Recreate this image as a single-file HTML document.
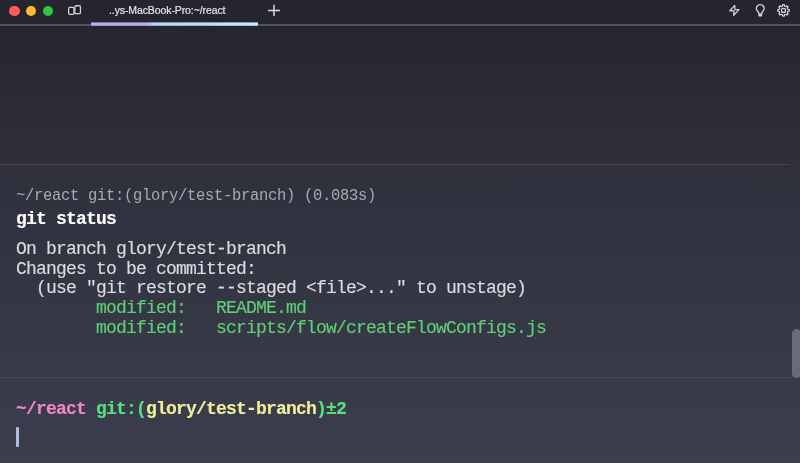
<!DOCTYPE html>
<html><head><meta charset="utf-8">
<style>
html,body{margin:0;padding:0;}
body{width:800px;height:463px;overflow:hidden;position:relative;background:#262631;}
#term{position:absolute;left:0;top:26px;width:800px;height:437px;
  background:linear-gradient(to bottom,#262631 0px,#2a2a36 62px,#2e2e3a 114px,#2f303c 138px,#353745 280px,#3c3e4e 437px);}
#titlebar{position:absolute;left:0;top:0;width:800px;height:24px;background:#252530;}
#tline{position:absolute;left:0;top:24px;width:800px;height:2px;background:#53535d;}

.dot{position:absolute;top:5.75px;width:10.5px;height:10.5px;border-radius:50%;}
.t{position:absolute;left:16px;white-space:pre;will-change:transform;font-family:"Liberation Mono",monospace;line-height:20px;}
.o{font-size:18px;letter-spacing:-0.8px;color:#dcdce0;-webkit-text-stroke:0.15px currentColor;}
.h{font-size:15.5px;letter-spacing:-0.3px;color:#a8a8b0;transform:scaleY(1.07);transform-origin:0 14px;}
.b{font-weight:bold;}
#tabtitle{position:absolute;will-change:transform;left:109px;top:4.4px;font-family:"Liberation Sans",sans-serif;font-size:10.5px;color:#e4e4e8;-webkit-text-stroke:0.2px #e4e4e8;letter-spacing:-0.1px;white-space:pre;line-height:12px;}
.sep{position:absolute;left:0;width:790px;height:1px;background:#454552;}
#scroll{position:absolute;left:792px;top:329px;width:9px;height:49px;border-radius:4.5px;background:#6a6b77;}
#cursor{position:absolute;left:16px;top:427px;width:3px;height:20px;background:#aebce6;border-radius:1px;}
svg{position:absolute;}
</style></head><body>
<div id="term"></div>
<div id="titlebar"></div>
<div id="tline"></div>
<svg id="tabul" style="left:91px;top:20px" width="167" height="8" viewBox="0 0 167 8"><defs><linearGradient id="ug" x1="0" x2="1" y1="0" y2="0"><stop offset="0" stop-color="#b9a9ee"/><stop offset="0.34" stop-color="#bcaef0"/><stop offset="0.38" stop-color="#bcd4f8"/><stop offset="1" stop-color="#c8ecfe"/></linearGradient></defs><rect x="0" y="2.4" width="167" height="3.3" fill="url(#ug)"/></svg>
<div class="dot" style="left:9.25px;background:#fe5f57;"></div>
<div class="dot" style="left:25.75px;background:#febc2e;"></div>
<div class="dot" style="left:42.65px;background:#2cc840;"></div>
<svg style="left:66px;top:3px" width="18" height="14" viewBox="0 0 18 14">
  <rect x="2.65" y="4.45" width="5.3" height="7" rx="1.2" fill="#1c1c24" stroke="#d0d0d6" stroke-width="1.3"/>
  <rect x="8.85" y="2.75" width="5.6" height="7.9" rx="1.2" fill="#1c1c24" stroke="#d0d0d6" stroke-width="1.3"/>
</svg>
<div id="tabtitle">..ys-MacBook-Pro:~/react</div>
<svg style="left:266px;top:3px" width="16" height="16" viewBox="0 0 16 16">
  <path d="M8 1.7V13M2.1 7.4H13.9" stroke="#dadade" stroke-width="1.5" fill="none"/>
</svg>
<svg style="left:725px;top:1px" width="20" height="20" viewBox="0 0 20 20">
  <path d="M9.68 4.34 L4.89 9.76 L9.12 9.86 L8.66 14.36 L13.91 8.57 L9.95 8.38 Z" stroke="#d8d8dc" stroke-width="1.25" fill="none" stroke-linejoin="round"/>
</svg>
<svg style="left:750px;top:1px" width="20" height="20" viewBox="0 0 20 20">
  <path d="M8.32 10.9 A3.9 3.9 0 1 1 12.18 10.9 L11.8 12.8 H8.7 Z" stroke="#d8d8dc" stroke-width="1.25" fill="none" stroke-linejoin="round"/>
  <rect x="8.3" y="13.3" width="3.9" height="2.2" rx="0.9" fill="#d8d8dc"/>
</svg>
<svg style="left:773px;top:1px" width="20" height="20" viewBox="0 0 20 20">
  <circle cx="10.5" cy="9.4" r="2" stroke="#d8d8dc" stroke-width="1.25" fill="none"/>
  <path d="M16.30 9.40 L16.28 9.70 L16.20 10.00 L15.91 10.26 L15.28 10.42 L14.81 10.55 L14.62 10.74 L14.52 10.94 L14.43 11.15 L14.36 11.37 L14.36 11.63 L14.60 12.06 L14.93 12.62 L14.95 13.00 L14.80 13.27 L14.60 13.50 L14.37 13.70 L14.10 13.85 L13.72 13.83 L13.16 13.50 L12.73 13.26 L12.47 13.26 L12.25 13.33 L12.04 13.42 L11.84 13.52 L11.65 13.71 L11.52 14.18 L11.36 14.81 L11.10 15.10 L10.80 15.18 L10.50 15.20 L10.20 15.18 L9.90 15.10 L9.64 14.81 L9.48 14.18 L9.35 13.71 L9.16 13.52 L8.96 13.42 L8.75 13.33 L8.53 13.26 L8.27 13.26 L7.84 13.50 L7.28 13.83 L6.90 13.85 L6.63 13.70 L6.40 13.50 L6.20 13.27 L6.05 13.00 L6.07 12.62 L6.40 12.06 L6.64 11.63 L6.64 11.37 L6.57 11.15 L6.48 10.94 L6.38 10.74 L6.19 10.55 L5.72 10.42 L5.09 10.26 L4.80 10.00 L4.72 9.70 L4.70 9.40 L4.72 9.10 L4.80 8.80 L5.09 8.54 L5.72 8.38 L6.19 8.25 L6.38 8.06 L6.48 7.86 L6.57 7.65 L6.64 7.43 L6.64 7.17 L6.40 6.74 L6.07 6.18 L6.05 5.80 L6.20 5.53 L6.40 5.30 L6.63 5.10 L6.90 4.95 L7.28 4.97 L7.84 5.30 L8.27 5.54 L8.53 5.54 L8.75 5.47 L8.96 5.38 L9.16 5.28 L9.35 5.09 L9.48 4.62 L9.64 3.99 L9.90 3.70 L10.20 3.62 L10.50 3.60 L10.80 3.62 L11.10 3.70 L11.36 3.99 L11.52 4.62 L11.65 5.09 L11.84 5.28 L12.04 5.38 L12.25 5.47 L12.47 5.54 L12.73 5.54 L13.16 5.30 L13.72 4.97 L14.10 4.95 L14.37 5.10 L14.60 5.30 L14.80 5.53 L14.95 5.80 L14.93 6.18 L14.60 6.74 L14.36 7.17 L14.36 7.43 L14.43 7.65 L14.52 7.86 L14.62 8.06 L14.81 8.25 L15.28 8.38 L15.91 8.54 L16.20 8.80 L16.28 9.10 Z" stroke="#d8d8dc" stroke-width="1.25" fill="none" stroke-linejoin="round"/>
</svg>

<div class="sep" style="top:164px"></div>
<div class="sep" style="top:377px;width:792px;background:#434454"></div>
<div id="scroll"></div>

<div class="t h" style="top:186.1px">~/react git:(glory/test-branch) (0.083s)</div>
<div class="t o b" style="top:209px;color:#ffffff">git status</div>
<div class="t o" style="top:238.5px">On branch glory/test-branch</div>
<div class="t o" style="top:258.5px">Changes to be committed:</div>
<div class="t o" style="top:278.2px">  (use "git restore --staged &lt;file&gt;..." to unstage)</div>
<div class="t o" style="top:297.9px;color:#5fcf76">        modified:   README.md</div>
<div class="t o" style="top:317.8px;color:#5fcf76">        modified:   scripts/flow/createFlowConfigs.js</div>
<div class="t o b" style="top:398.9px"><span style="color:#ee86c8">~/react </span><span style="color:#58e07e">git:(</span><span style="color:#f0ee9a">glory/test-branch</span><span style="color:#58e07e">)±2</span></div>
<div id="cursor"></div>
</body></html>
